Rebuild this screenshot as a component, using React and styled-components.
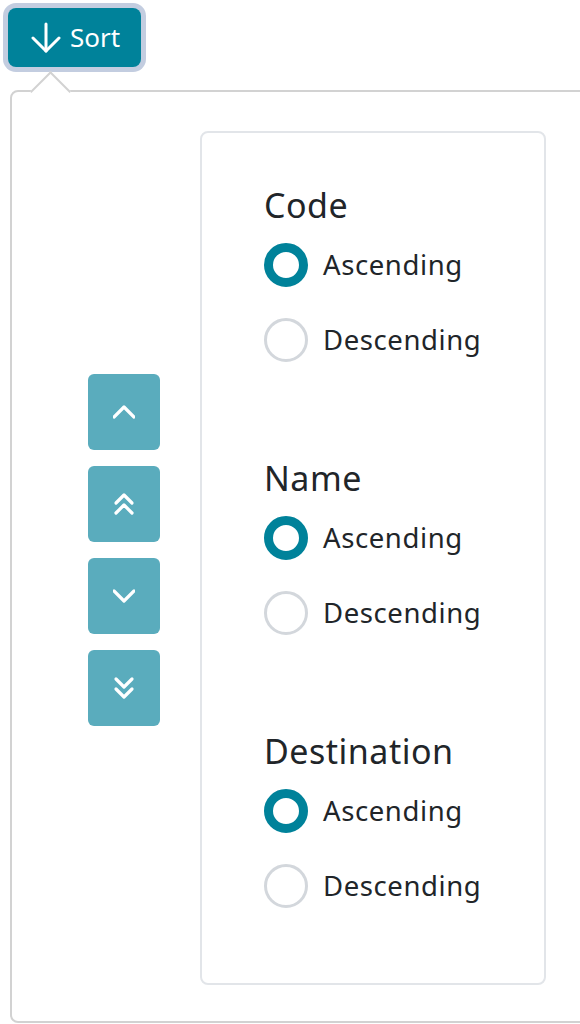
import { useState } from "react";
import styled, { createGlobalStyle } from "styled-components";

const GlobalStyle = createGlobalStyle`
    html, body {
        margin: 0;
        padding: 0;
        background: #fff;
        overflow: hidden;
    }
    body {
        font-family: "Noto Sans", "Open Sans", sans-serif;
        color: #212529;
    }
`;

const fields = ["Code", "Name", "Destination"];

const ArrowDownIcon = () => (
    <svg width="30" height="32" viewBox="0 0 30 32" fill="none" stroke="currentColor" strokeWidth="3" strokeLinecap="round" strokeLinejoin="round">
        <path d="M15 2 V29" />
        <path d="M2 16 L15 29 L28 16" />
    </svg>
);

const Chevron = ({ dir = "up", double = false }) => {
    const flip = dir === "down";
    const paths = double
        ? ["M3 11 L11 3 L19 11", "M3 21 L11 13 L19 21"]
        : ["M1 13 L11 3 L21 13"];
    const h = double ? 24 : 16;
    return (
        <svg
            width="22"
            height={h}
            viewBox={`0 0 22 ${h}`}
            fill="none"
            stroke="currentColor"
            strokeWidth="3.2"
            strokeLinecap="round"
            strokeLinejoin="round"
            style={{ transform: flip ? "scaleY(-1)" : "none" }}
        >
            {paths.map((d) => (
                <path key={d} d={d} />
            ))}
        </svg>
    );
};

export default function App() {
    const [order, setOrder] = useState({ Code: "asc", Name: "asc", Destination: "asc" });

    return (
        <>
            <GlobalStyle />
            <Page>
                <SortButton>
                    <ArrowDownIcon />
                    <span>Sort</span>
                </SortButton>
                <Popover>
                    <MoveColumn>
                        <MoveButton aria-label="Move up"><Chevron dir="up" /></MoveButton>
                        <MoveButton aria-label="Move to top"><Chevron dir="up" double /></MoveButton>
                        <MoveButton aria-label="Move down"><Chevron dir="down" /></MoveButton>
                        <MoveButton aria-label="Move to bottom"><Chevron dir="down" double /></MoveButton>
                    </MoveColumn>
                    <Card>
                        {fields.map((f) => (
                            <Section key={f}>
                                <Heading>{f}</Heading>
                                <Options>
                                    {["asc", "desc"].map((v) => (
                                        <Option key={v} onClick={() => setOrder({ ...order, [f]: v })}>
                                            <Radio $checked={order[f] === v} />
                                            {v === "asc" ? "Ascending" : "Descending"}
                                        </Option>
                                    ))}
                                </Options>
                            </Section>
                        ))}
                    </Card>
                </Popover>
            </Page>
        </>
    );
}

const Page = styled.div`
    padding: 8px 0 0 8px;
    display: flex;
    flex-direction: column;
    align-items: flex-start;
`;

const SortButton = styled.button`
    display: flex;
    align-items: center;
    gap: 9px;
    width: 133px;
    height: 59px;
    padding: 0 0 0 23px;
    border: none;
    border-radius: 8px;
    background: #00829a;
    color: #fff;
    font-family: "Noto Sans", sans-serif;
    font-size: 26px;
    box-shadow: 0 0 0 5px #c3cde0;
    cursor: pointer;

    span {
        margin-top: -2px;
    }
`;

const Popover = styled.div`
    position: relative;
    margin: 23px 0 0 2px;
    width: 640px;
    height: 933px;
    box-sizing: border-box;
    border: 2px solid #d2d2d2;
    border-radius: 8px;
    background: #fff;
    display: flex;
    align-items: center;
    gap: 40px;
    padding: 39px 0 36px 76px;

    &::before {
        content: "";
        position: absolute;
        top: -15px;
        left: 24px;
        width: 27px;
        height: 27px;
        background: #fff;
        border-top: 2px solid #d2d2d2;
        border-left: 2px solid #d2d2d2;
        transform: rotate(45deg);
    }
`;

const MoveColumn = styled.div`
    display: flex;
    flex-direction: column;
    gap: 16px;
    margin-top: -16px;
`;

const MoveButton = styled.button`
    width: 72px;
    height: 76px;
    border: none;
    border-radius: 6px;
    background: #5aacbd;
    color: #fff;
    display: flex;
    align-items: center;
    justify-content: center;
    padding: 0;
    cursor: pointer;
`;

const Card = styled.div`
    align-self: stretch;
    border: 2px solid #e2e5e9;
    border-radius: 8px;
    padding: 53px 63px 0 62px;
    display: flex;
    flex-direction: column;
    gap: 97px;
`;

const Section = styled.div`
    display: flex;
    flex-direction: column;
`;

const Heading = styled.h5`
    margin: 0 0 19px;
    font-size: 34px;
    font-weight: 400;
    letter-spacing: 0.5px;
    line-height: 38px;
    color: #212529;
`;

const Options = styled.div`
    display: flex;
    flex-direction: column;
    gap: 31px;
`;

const Option = styled.label`
    display: flex;
    align-items: center;
    gap: 15px;
    font-size: 27.5px;
    letter-spacing: 0.6px;
    line-height: 44px;
    color: #212529;
    cursor: pointer;
`;

const Radio = styled.span`
    width: 44px;
    height: 44px;
    box-sizing: border-box;
    border-radius: 50%;
    flex-shrink: 0;
    background: #fff;
    border: ${(p) => (p.$checked ? "9px solid #00829a" : "3px solid #d3d7dc")};
`;
